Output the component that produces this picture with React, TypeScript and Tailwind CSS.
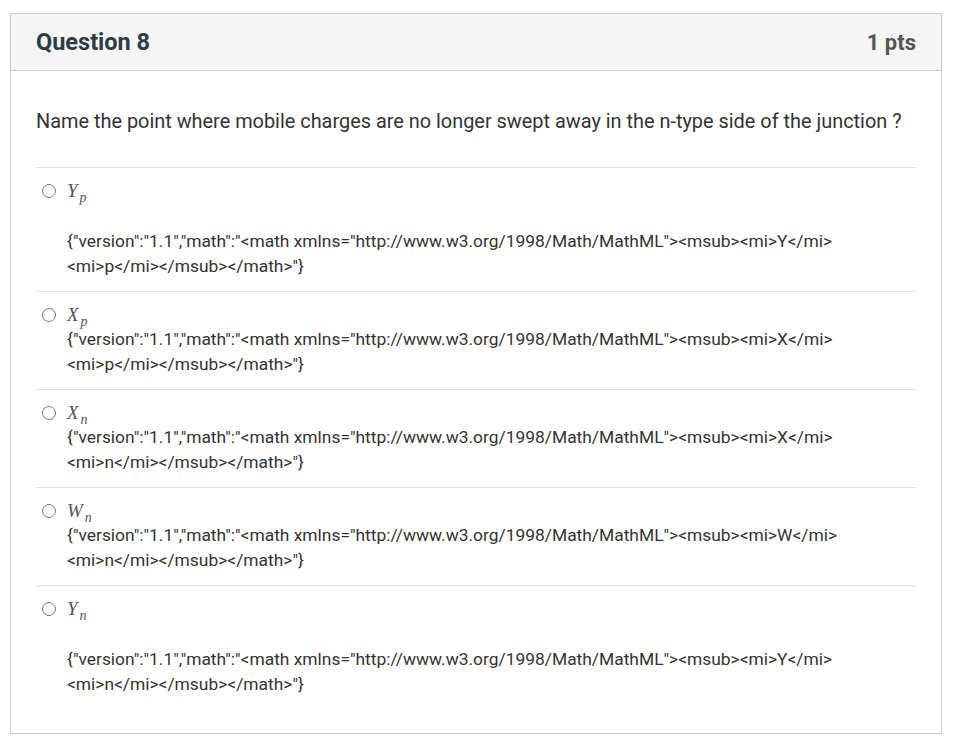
import React from 'react';

const options = [
  { v: 'Y', s: 'p', gap: true },
  { v: 'X', s: 'p', gap: false },
  { v: 'X', s: 'n', gap: false },
  { v: 'W', s: 'n', gap: false },
  { v: 'Y', s: 'n', gap: true },
];

function MathSym({ v, s }: { v: string; s: string }) {
  return (
    <span className="italic text-[19px] text-[#555]" style={{ fontFamily: '"Liberation Serif", "Times New Roman", serif' }}>
      {v}
      <span className="text-[14px] relative top-[5px] ml-[2px]">{s}</span>
    </span>
  );
}

export default function App() {
  return (
    <div className="bg-white w-[956px] h-[746px] pt-[13px] pl-[10px]" style={{ fontFamily: 'Roboto, "Liberation Sans", sans-serif' }}>
      <div className="w-[932px] h-[721px] border border-[#c7cdd1] text-[#2d3b45]">
        <div className="h-[57px] bg-[#f5f5f5] border-b border-[#c7cdd1] px-[25px] flex items-center justify-between">
          <h2 className="text-[23.5px] font-bold mt-[2px]">Question 8</h2>
          <div className="text-[22px] font-bold text-[#555]">1 pts</div>
        </div>
        <div className="px-[25px]">
          <p className="pt-[37px] pb-[31px] text-[19.9px] leading-[28px] whitespace-nowrap text-[#333]">
            Name the point where mobile charges are no longer swept away in the n-type side of the junction ?
          </p>
          {options.map((o, i) => (
            <div key={i} className={`border-t border-[#e1e4e6] pt-[11px] ${i === 4 ? 'pb-[37px]' : 'pb-[13px]'}`}>
              <div className="flex items-center h-[24px]">
                <span className="ml-[6px] w-[14px] h-[14px] rounded-full border border-[#777] bg-white shrink-0" />
                <span className="ml-[11px]"><MathSym v={o.v} s={o.s} /></span>
              </div>
              <div className={`ml-[31px] text-[17.4px] leading-[24.5px] text-[#333] whitespace-nowrap ${o.gap ? 'mt-[26px]' : ''}`}>
                {'{"version":"1.1","math":"<math xmlns="http://www.w3.org/1998/Math/MathML"><msub><mi>' + o.v + '</mi>'}
                <br />
                {'<mi>' + o.s + '</mi></msub></math>"}'}
              </div>
            </div>
          ))}
        </div>
      </div>
    </div>
  );
}
